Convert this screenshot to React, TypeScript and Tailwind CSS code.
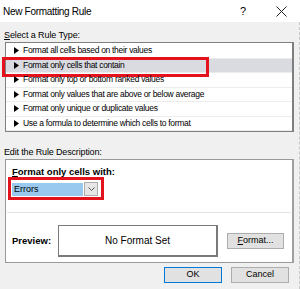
import React from "react";

const RULES = [
  "Format all cells based on their values",
  "Format only cells that contain",
  "Format only top or bottom ranked values",
  "Format only values that are above or below average",
  "Format only unique or duplicate values",
  "Use a formula to determine which cells to format",
];

const FONT = { fontFamily: "'Liberation Sans', Arial, sans-serif" };

function Arrow() {
  return (
    <svg width="5" height="7" viewBox="0 0 5 7" className="shrink-0">
      <polygon points="0,0 5,3.5 0,7" fill="#000" />
    </svg>
  );
}

export default function App() {
  return (
    <div className="relative w-[300px] h-[289px] bg-[#f0f0f0] text-[9px] text-black overflow-hidden" style={FONT}>
      {/* Title bar */}
      <div className="h-[22px] bg-white flex items-center pl-[3px] text-[10px] tracking-[-0.3px]">
        <span className="flex-1">New Formatting Rule</span>
        <span className="w-[10px] text-[11px] mr-[26px]">?</span>
        <svg width="11" height="11" viewBox="0 0 11 11" className="mr-[13px]">
          <path d="M0.5 0.5 L10.5 10.5 M10.5 0.5 L0.5 10.5" stroke="#222" strokeWidth="1" />
        </svg>
      </div>

      {/* Rule type */}
      <div className="h-[14px] leading-[14px] mt-[6px] pl-[4px] tracking-[-0.1px]">
        <u>S</u>elect a Rule Type:
      </div>
      <div className="ml-[5px] w-[289px] h-[90px] bg-white border border-[#7f7f7f] border-r-2 border-b-2 pt-[1px]">
        {RULES.map((r, i) => (
          <div
            key={r}
            className={
              "relative h-[14.5px] flex items-center gap-[4px] pl-[8px] border-b border-[#ececec] text-[8.5px] tracking-[-0.3px] " +
              (i === 1 ? "bg-[#dadbe1]" : "")
            }
          >
            <Arrow />
            <span className="whitespace-nowrap">{r}</span>
            {i === 1 && (
              <div className="absolute left-[-4px] top-[-2px] w-[207px] h-[20px] border-[3px] border-[#e3121d]" />
            )}
          </div>
        ))}
      </div>

      {/* Description */}
      <div className="h-[14px] leading-[14px] mt-[13px] pl-[4px] tracking-[-0.15px]">Edit the Rule Description:</div>
      <div className="ml-[5px] w-[289px] h-[104px] bg-white border border-[#9a9a9a] border-r-2 border-r-[#a0a0a0] flex flex-col">
        <div className="h-[14px] leading-[14px] mt-[5px] ml-[6px] font-bold text-[9.5px]">
          <u>F</u>ormat only cells with:
        </div>
        <div className="relative ml-[6px] mt-[2px] w-[86px] h-[16px] flex items-center">
          <div className="absolute left-[-4px] top-[-4px] w-[96px] h-[23px] border-[3px] border-[#e3121d]" />
          <div className="w-[71px] h-[13px] bg-[#99c9ef] leading-[13px] pl-[2px]">Errors</div>
          <div className="w-[14px] h-[14px] ml-[1px] bg-[#e6e6e6] border border-[#acacac] flex items-center justify-center">
            <svg width="7" height="4" viewBox="0 0 7 4">
              <path d="M0.5 0.5 L3.5 3.5 L6.5 0.5" stroke="#555" fill="none" strokeWidth="1" />
            </svg>
          </div>
        </div>
        <div className="mt-[15px] mx-[1px] h-px bg-[#e3e3e3]" />
        <div className="mt-[12px] flex items-center">
          <span className="ml-[6px] w-[46px] font-bold text-[9.5px]">Preview:</span>
          <div className="w-[160px] h-[32px] border border-[#7a7a7a] border-r-2 border-b-2 flex items-center justify-center text-[10px]">
            No Format Set
          </div>
          <div className="ml-[9px] w-[57px] h-[16px] bg-[#e1e1e1] border border-[#adadad] flex items-center justify-center">
            <span><u>F</u>ormat...</span>
          </div>
        </div>
      </div>

      {/* Buttons */}
      <div className="mt-[4px] flex justify-end gap-[9px] pr-[11px]">
        <div className="w-[58px] h-[16px] bg-[#e1e1e1] border border-[#0078d7] flex items-center justify-center">OK</div>
        <div className="w-[58px] h-[16px] bg-[#e1e1e1] border border-[#adadad] flex items-center justify-center">Cancel</div>
      </div>

      {/* resize edge marks */}
      <div className="absolute right-0 top-[22px] bottom-0 w-px border-r border-dashed border-[#c8c8c8]" />
    </div>
  );
}
